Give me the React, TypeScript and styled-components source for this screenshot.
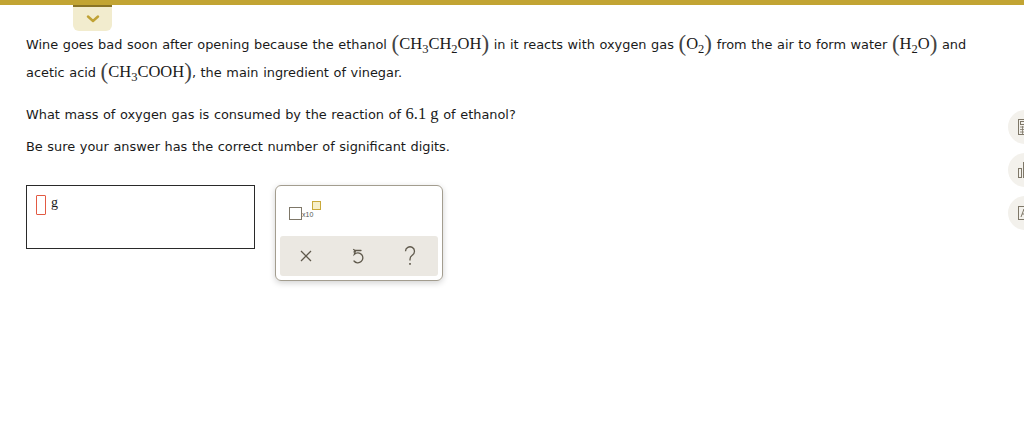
import styled, { createGlobalStyle } from "styled-components";

const Global = createGlobalStyle`
  body {
    margin: 0;
    background: #fff;
    font-family: "DejaVu Sans", Verdana, sans-serif;
    color: #1a1a1a;
    overflow: hidden;
  }
`;

const Page = styled.div`
  position: relative;
  width: 1024px;
  height: 446px;
  overflow: hidden;
`;

const TopBar = styled.div`
  height: 5px;
  background: #c2a433;
`;

const Tab = styled.div`
  margin-left: 73px;
  width: 39px;
  height: 24px;
  border-top: 2px solid #8a7426;
  background: #f2ecce;
  border-radius: 0 0 6px 6px;
  display: flex;
  align-items: center;
  justify-content: center;
`;

const Question = styled.div`
  padding: 0 26px;
  font-size: 12.9px;
  word-spacing: 0.5px;
  width: 970px;
`;

const Para = styled.p<{ gap?: number }>`
  margin: 0 0 ${(p) => p.gap ?? 0}px;
  line-height: 28px;
`;

const Math = styled.span`
  font-family: "Liberation Serif", "Times New Roman", serif;
  font-size: 16.5px;
  line-height: 1;
  white-space: nowrap;
  word-spacing: 0;
`;

const Paren = styled.span`
  font-family: "Liberation Serif", serif;
  font-size: 23px;
  line-height: 1;
  color: #444;
  vertical-align: -2px;
`;

const Sub = styled.sub`
  font-size: 12.5px;
  line-height: 1;
  vertical-align: -4px;
`;

const Line = styled.p`
  margin: 0;
  line-height: 32px;
`;

const AnswerRow = styled.div`
  display: flex;
  align-items: flex-start;
  gap: 20px;
  margin-top: 22px;
  padding-left: 26px;
`;

const AnswerBox = styled.div`
  width: 229px;
  height: 64px;
  border: 1px solid #2a2a2a;
  display: flex;
  align-items: flex-start;
  gap: 5px;
  padding: 9px 0 0 9px;
  box-sizing: border-box;
`;

const Blank = styled.div`
  width: 8px;
  height: 18px;
  border: 1px solid #e25a43;
  border-radius: 1px;
`;

const Unit = styled.span`
  font-family: "Liberation Serif", serif;
  font-size: 14px;
  line-height: 16px;
`;

const Palette = styled.div`
  width: 168px;
  height: 96px;
  border: 1px solid #a39d8f;
  border-radius: 6px;
  box-shadow: 0 2px 6px rgba(0, 0, 0, 0.18);
  display: flex;
  flex-direction: column;
  justify-content: space-between;
  padding: 4px;
  box-sizing: border-box;
`;

const PaletteTop = styled.div`
  padding: 12px 0 0 9px;
  height: 40px;
  box-sizing: border-box;
`;

const Sci = styled.div`
  position: relative;
  width: 34px;
  height: 20px;
`;

const SciBase = styled.div`
  position: absolute;
  left: 0;
  top: 5px;
  width: 11px;
  height: 11px;
  border: 1px solid #7e7768;
`;

const SciText = styled.span`
  position: absolute;
  left: 13px;
  top: 9px;
  font-family: "Liberation Sans", Arial, sans-serif;
  font-size: 7px;
  color: #555;
`;

const SciExp = styled.div`
  position: absolute;
  left: 23px;
  top: -1px;
  width: 7px;
  height: 7px;
  border: 1px solid #c9a93a;
  background: #f6efc9;
`;

const Actions = styled.div`
  height: 40px;
  background: #ebe8e2;
  border-radius: 3px;
  display: flex;
  align-items: center;
  gap: 28px;
  padding: 0 14px;
`;

const ActionBtn = styled.div`
  width: 24px;
  height: 24px;
  display: flex;
  align-items: center;
  justify-content: center;
  color: #5f594c;
`;

const Rail = styled.div`
  position: absolute;
  right: -18px;
  top: 110px;
  display: flex;
  flex-direction: column;
  gap: 9px;
`;

const RailBtn = styled.div`
  width: 34px;
  height: 34px;
  border-radius: 50%;
  background: #f3f1ec;
  display: flex;
  align-items: center;
  padding-left: 10px;
  box-sizing: border-box;
  color: #7e7768;
`;

function Chevron() {
  return (
    <svg width="14" height="8" viewBox="0 0 14 8">
      <polyline points="2,1.5 7,6 12,1.5" fill="none" stroke="#c0a235" strokeWidth="2.4" strokeLinecap="round" strokeLinejoin="round" />
    </svg>
  );
}

function Formula({ parts }: { parts: (string | [string])[] }) {
  return (
    <Math>
      <Paren>(</Paren>
      {parts.map((p, i) => (typeof p === "string" ? <span key={i}>{p}</span> : <Sub key={i}>{p[0]}</Sub>))}
      <Paren>)</Paren>
    </Math>
  );
}

export default function App() {
  return (
    <Page>
      <Global />
      <TopBar />
      <Tab>
        <Chevron />
      </Tab>
      <Question>
        <Para gap={12}>
          Wine goes bad soon after opening because the ethanol <Formula parts={["CH", ["3"], "CH", ["2"], "OH"]} /> in it reacts
          with oxygen gas <Formula parts={["O", ["2"]]} /> from the air to form water <Formula parts={["H", ["2"], "O"]} /> and
          <br />
          acetic acid <Formula parts={["CH", ["3"], "COOH"]} />, the main ingredient of vinegar.
        </Para>
        <Line>
          What mass of oxygen gas is consumed by the reaction of <Math>6.1 g</Math> of ethanol?
        </Line>
        <Line>Be sure your answer has the correct number of significant digits.</Line>
      </Question>
      <AnswerRow>
        <AnswerBox>
          <Blank />
          <Unit>g</Unit>
        </AnswerBox>
        <Palette>
          <PaletteTop>
            <Sci>
              <SciBase />
              <SciText>x10</SciText>
              <SciExp />
            </Sci>
          </PaletteTop>
          <Actions>
            <ActionBtn>
              <svg width="12" height="12" viewBox="0 0 12 12">
                <path d="M1 1L11 11M11 1L1 11" stroke="currentColor" strokeWidth="1.3" />
              </svg>
            </ActionBtn>
            <ActionBtn>
              <svg width="14" height="16" viewBox="0 0 14 16">
                <path d="M4 2.5H10M4.5 2.5L3.4 6.2A5 5 0 1 1 3 13" fill="none" stroke="currentColor" strokeWidth="1.3" strokeLinecap="round" />
                <path d="M2.2 1.2L4.2 2.6L2.6 4.4" fill="none" stroke="currentColor" strokeWidth="1.2" />
              </svg>
            </ActionBtn>
            <ActionBtn>
              <svg width="12" height="20" viewBox="0 0 12 20">
                <path d="M1.5 5.2A4.5 4.5 0 1 1 8.2 9.2C6.6 10.3 6 11.2 6 13.2V14.5" fill="none" stroke="currentColor" strokeWidth="1.3" />
                <rect x="5.2" y="17" width="1.6" height="1.8" fill="currentColor" />
              </svg>
            </ActionBtn>
          </Actions>
        </Palette>
      </AnswerRow>
      <Rail>
        <RailBtn>
          <svg width="12" height="16" viewBox="0 0 12 16">
            <rect x="0.5" y="0.5" width="11" height="15" fill="none" stroke="currentColor" />
            <rect x="2.5" y="2.5" width="7" height="3" fill="none" stroke="currentColor" />
            <path d="M2 8H10M2 10.5H10M2 13H10M4.5 7V15M7.5 7V15" stroke="currentColor" strokeWidth="0.8" />
          </svg>
        </RailBtn>
        <RailBtn>
          <svg width="10" height="16" viewBox="0 0 10 16">
            <rect x="0.5" y="6.5" width="3" height="9" fill="none" stroke="currentColor" />
            <rect x="5.5" y="0.5" width="3" height="15" fill="none" stroke="currentColor" />
          </svg>
        </RailBtn>
        <RailBtn>
          <svg width="12" height="14" viewBox="0 0 12 14">
            <rect x="0.5" y="0.5" width="11" height="13" fill="none" stroke="currentColor" />
            <path d="M3 11L6 3L9 11M4.2 8H7.8" fill="none" stroke="currentColor" />
          </svg>
        </RailBtn>
      </Rail>
    </Page>
  );
}
